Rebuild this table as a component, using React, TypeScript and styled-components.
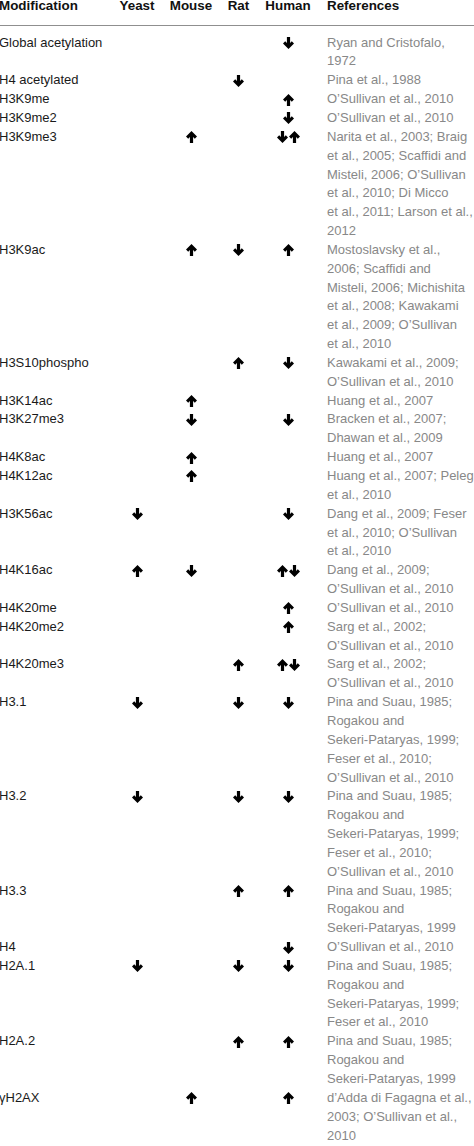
import styled, { createGlobalStyle } from 'styled-components';

const GlobalStyle = createGlobalStyle`
    html, body {
        margin: 0;
        padding: 0;
        background: #fff;
        overflow: hidden;
    }
    body {
        font-family: "Liberation Sans", Arial, Helvetica, sans-serif;
    }
`;

const LINE = 18.85;

const Table = styled.div`
    width: 474px;
    margin-left: -1px;
`;

const Grid = styled.div`
    display: grid;
    grid-template-columns: 115px 46px 62px 33px 66px 1fr;
`;

const HeadRow = styled(Grid)`
    margin-top: -4px;
    padding-bottom: 10px;
    border-bottom: 1px solid #8f8f8f;
    margin-right: -1px;
`;

const HeadCell = styled.div<{ $align?: 'left' | 'center' }>`
    font-size: 13.4px;
    font-weight: 700;
    line-height: 19px;
    color: #111;
    text-align: ${p => p.$align || 'center'};
    white-space: nowrap;
`;

const RefHead = styled(HeadCell)`
    padding-left: 6px;
`;

const Body = styled.div`
    padding-top: 7.6px;
`;

const Row = styled(Grid)`
    align-items: start;
`;

const Name = styled.div`
    font-size: 13px;
    line-height: ${LINE}px;
    color: #1a1a1a;
    white-space: nowrap;
`;

const Marks = styled.div`
    height: ${LINE}px;
    display: flex;
    justify-content: center;
    align-items: center;
    gap: 1px;
`;

const Refs = styled.div`
    padding-left: 6px;
    font-size: 13px;
    line-height: ${LINE}px;
    color: #888;
`;

const RefLine = styled.div`
    white-space: nowrap;
`;

const ArrowSvg = styled.svg<{ $down?: boolean }>`
    width: 11px;
    height: 12px;
    display: block;
    transform: ${p => (p.$down ? 'scaleY(-1)' : 'none')};
`;

const Arrow = ({ down }: { down?: boolean }) => (
    <ArrowSvg $down={down} viewBox="0 0 11 12">
        <polygon
            fill="#000"
            points="5.5,0 11,5.5 8.8,7.7 7.1,6 7.1,12 3.9,12 3.9,6 2.2,7.7 0,5.5"
        />
    </ArrowSvg>
);

// u = up, d = down; several letters give several arrows side by side
const Cell = ({ marks }: { marks: string }) => (
    <Marks>
        {marks.split('').map((m, i) => (
            <Arrow key={i} down={m === 'd'} />
        ))}
    </Marks>
);

type RowData = [string, string, string, string, string, string[]];

const pina = ['Pina and Suau, 1985;', 'Rogakou and'];

const rows: RowData[] = [
    ['Global acetylation', '', '', '', 'd', ['Ryan and Cristofalo,', '1972']],
    ['H4 acetylated', '', '', 'd', '', ['Pina et al., 1988']],
    ['H3K9me', '', '', '', 'u', ['O’Sullivan et al., 2010']],
    ['H3K9me2', '', '', '', 'd', ['O’Sullivan et al., 2010']],
    ['H3K9me3', '', 'u', '', 'du', [
        'Narita et al., 2003; Braig',
        'et al., 2005; Scaffidi and',
        'Misteli, 2006; O’Sullivan',
        'et al., 2010; Di Micco',
        'et al., 2011; Larson et al.,',
        '2012',
    ]],
    ['H3K9ac', '', 'u', 'd', 'u', [
        'Mostoslavsky et al.,',
        '2006; Scaffidi and',
        'Misteli, 2006; Michishita',
        'et al., 2008; Kawakami',
        'et al., 2009; O’Sullivan',
        'et al., 2010',
    ]],
    ['H3S10phospho', '', '', 'u', 'd', ['Kawakami et al., 2009;', 'O’Sullivan et al., 2010']],
    ['H3K14ac', '', 'u', '', '', ['Huang et al., 2007']],
    ['H3K27me3', '', 'd', '', 'd', ['Bracken et al., 2007;', 'Dhawan et al., 2009']],
    ['H4K8ac', '', 'u', '', '', ['Huang et al., 2007']],
    ['H4K12ac', '', 'u', '', '', ['Huang et al., 2007; Peleg', 'et al., 2010']],
    ['H3K56ac', 'd', '', '', 'd', ['Dang et al., 2009; Feser', 'et al., 2010; O’Sullivan', 'et al., 2010']],
    ['H4K16ac', 'u', 'd', '', 'ud', ['Dang et al., 2009;', 'O’Sullivan et al., 2010']],
    ['H4K20me', '', '', '', 'u', ['O’Sullivan et al., 2010']],
    ['H4K20me2', '', '', '', 'u', ['Sarg et al., 2002;', 'O’Sullivan et al., 2010']],
    ['H4K20me3', '', '', 'u', 'ud', ['Sarg et al., 2002;', 'O’Sullivan et al., 2010']],
    ['H3.1', 'd', '', 'd', 'd', [...pina, 'Sekeri-Pataryas, 1999;', 'Feser et al., 2010;', 'O’Sullivan et al., 2010']],
    ['H3.2', 'd', '', 'd', 'd', [...pina, 'Sekeri-Pataryas, 1999;', 'Feser et al., 2010;', 'O’Sullivan et al., 2010']],
    ['H3.3', '', '', 'u', 'u', [...pina, 'Sekeri-Pataryas, 1999']],
    ['H4', '', '', '', 'd', ['O’Sullivan et al., 2010']],
    ['H2A.1', 'd', '', 'd', 'd', [...pina, 'Sekeri-Pataryas, 1999;', 'Feser et al., 2010']],
    ['H2A.2', '', '', 'u', 'u', [...pina, 'Sekeri-Pataryas, 1999']],
    ['γH2AX', '', 'u', '', 'u', ['d’Adda di Fagagna et al.,', '2003; O’Sullivan et al.,', '2010']],
];

const App = () => {
    return (
        <Table>
            <GlobalStyle />
            <HeadRow>
                <HeadCell $align="left">Modification</HeadCell>
                <HeadCell>Yeast</HeadCell>
                <HeadCell>Mouse</HeadCell>
                <HeadCell>Rat</HeadCell>
                <HeadCell>Human</HeadCell>
                <RefHead $align="left">References</RefHead>
            </HeadRow>
            <Body>
                {rows.map(([name, yeast, mouse, rat, human, refs]) => (
                    <Row key={name}>
                        <Name>{name}</Name>
                        <Cell marks={yeast} />
                        <Cell marks={mouse} />
                        <Cell marks={rat} />
                        <Cell marks={human} />
                        <Refs>
                            {refs.map((r, i) => (
                                <RefLine key={i}>{r}</RefLine>
                            ))}
                        </Refs>
                    </Row>
                ))}
            </Body>
        </Table>
    );
};

export default App;
